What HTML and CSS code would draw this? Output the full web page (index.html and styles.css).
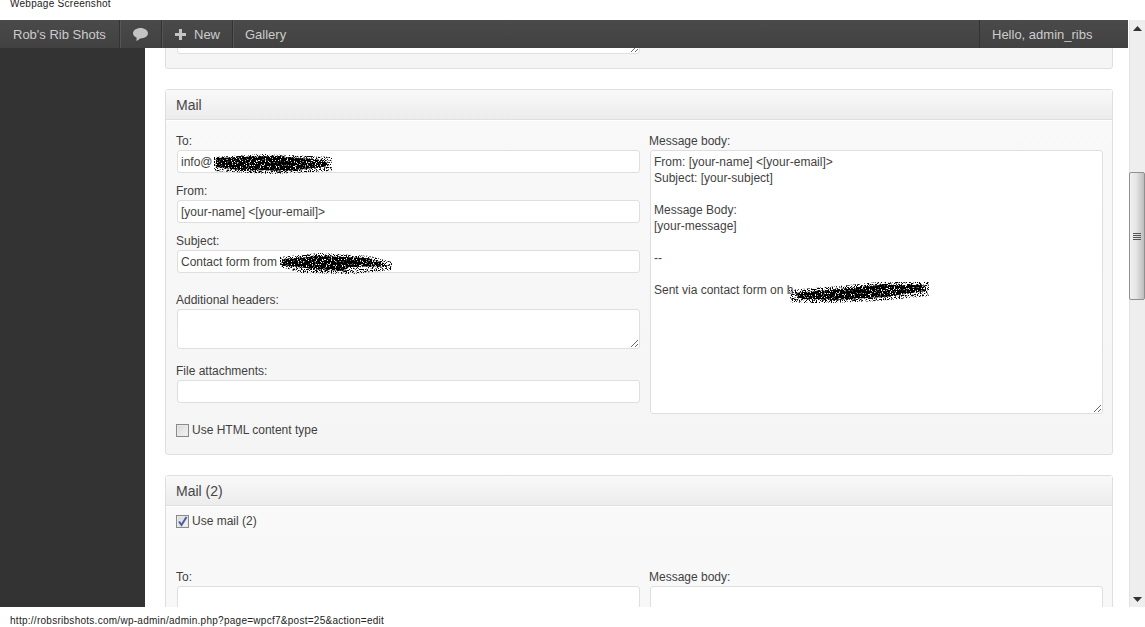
FILE: index.html
```html
<!DOCTYPE html>
<html lang="en">
<head>
<meta charset="utf-8">
<title>Edit contact form</title>
<link rel="stylesheet" href="styles.css">
</head>
<body>
<svg class="defs" width="0" height="0" aria-hidden="true">
  <filter id="speckle" x="0" y="0" width="100%" height="100%">
    <feTurbulence type="fractalNoise" baseFrequency="0.8" numOctaves="1" seed="7" result="n"/>
    <feColorMatrix in="n" type="matrix" values="0 0 0 0 0  0 0 0 0 0  0 0 0 0 0  12 0 0 0 -6" result="m"/>
    <feComposite in="SourceGraphic" in2="m" operator="in"/>
  </filter>
  <filter id="speckle-dense" x="0" y="0" width="100%" height="100%">
    <feTurbulence type="fractalNoise" baseFrequency="0.8" numOctaves="1" seed="3" result="n"/>
    <feColorMatrix in="n" type="matrix" values="0 0 0 0 0  0 0 0 0 0  0 0 0 0 0  12 0 0 0 -4.4" result="m"/>
    <feComposite in="SourceGraphic" in2="m" operator="in"/>
  </filter>
</svg>
<div class="caption">Webpage Screenshot</div>
<div class="window">
  <div class="viewport">
    <nav class="adminbar">
      <a class="bar-item bar-site">Rob's Rib Shots</a>
      <a class="bar-item bar-comments">
        <svg width="15" height="13" viewBox="0 0 15 13"><path fill="#c4c4c4" d="M7.500 0C3.400 0 0 2.300 0 5.200c0 1.900 1.400 3.500 3.500 4.400.3 1.200.1 2.300-.4 3.200 1.600-.4 3-1.400 3.800-2.400h.6c4.100 0 7.500-2.300 7.500-5.200S11.600 0 7.500 0z"/></svg>
      </a>
      <a class="bar-item bar-new">
        <svg width="11" height="11" viewBox="0 0 11 11"><path fill="#c4c4c4" d="M4 0h3v4h4v3H7v4H4V7H0V4h4z"/></svg>
        <span>New</span>
      </a>
      <a class="bar-item bar-gallery">Gallery</a>
      <a class="bar-item bar-user">Hello, admin_ribs</a>
    </nav>
    <div class="workspace">
      <aside class="sidebar"></aside>
      <main class="content">
        <section class="panel panel-cut">
          <textarea class="field-area stub-area" aria-label="Form"></textarea>
        </section>

        <section class="panel">
          <h3 class="panel-title">Mail</h3>
          <div class="panel-body">
            <div class="columns">
              <div class="col">
                <div class="field">
                  <label>To:</label>
                  <div class="scrub-wrap">
                    <input class="field-input" value="info@">
                    <svg class="scrub scrub-to" width="118" height="20" viewBox="0 0 118 20"><path filter="url(#speckle)" d="M0 3 50 0l68 3v14l-60 3L0 17z"/><path filter="url(#speckle-dense)" d="M2 4 60 2l50 4 5 6-40 5-50-1-23-3z"/></svg>
                  </div>
                </div>
                <div class="field">
                  <label>From:</label>
                  <input class="field-input" value="[your-name] &lt;[your-email]&gt;">
                </div>
                <div class="field field-wide">
                  <label>Subject:</label>
                  <div class="scrub-wrap">
                    <input class="field-input" value="Contact form from">
                    <svg class="scrub scrub-subject" width="112" height="21" viewBox="0 0 112 21"><path filter="url(#speckle)" d="M0 4 40 0l50 3 22 6v8l-40 4-50-1L0 14z"/><path filter="url(#speckle-dense)" d="M3 6 40 3l46 2 18 5 1 3-36 1-6 4-30-2-32-4z"/></svg>
                  </div>
                </div>
                <div class="field field-mid">
                  <label>Additional headers:</label>
                  <textarea class="field-area area-headers"></textarea>
                </div>
                <div class="field">
                  <label>File attachments:</label>
                  <input class="field-input">
                </div>
                <div class="check-row">
                  <span class="box"></span>
                  <span>Use HTML content type</span>
                </div>
              </div>
              <div class="col">
                <div class="field">
                  <label>Message body:</label>
                  <div class="scrub-wrap">
                    <textarea class="field-area area-body">From: [your-name] &lt;[your-email]&gt;
Subject: [your-subject]

Message Body:
[your-message]

--

Sent via contact form on h</textarea>
                    <svg class="scrub scrub-body" width="140" height="21" viewBox="0 0 140 21"><path filter="url(#speckle)" d="M0 8 50 4 90 0h50v14l-50 5-50 2H2z"/><path filter="url(#speckle-dense)" d="M6 11 50 7l40-4 44 0 3 6-41 6-50 3-36-1z"/></svg>
                  </div>
                </div>
              </div>
            </div>
          </div>
        </section>

        <section class="panel">
          <h3 class="panel-title">Mail (2)</h3>
          <div class="panel-body panel-body-second">
            <div class="check-row check-row-top">
              <span class="box">
                <svg width="11" height="11" viewBox="0 0 11 11"><path fill="none" stroke="#4a5f9e" stroke-width="2" d="M2 5.500 4.500 9 9.500 1"/></svg>
              </span>
              <span>Use mail (2)</span>
            </div>
            <div class="columns">
              <div class="col">
                <div class="field">
                  <label>To:</label>
                  <input class="field-input" aria-label="To">
                </div>
              </div>
              <div class="col">
                <div class="field">
                  <label>Message body:</label>
                  <textarea class="field-area area-body" aria-label="Message body"></textarea>
                </div>
              </div>
            </div>
          </div>
        </section>
      </main>
    </div>
  </div>
  <div class="scrollbar">
    <div class="sb-btn"><svg width="9" height="5" viewBox="0 0 9 5"><path fill="#333" d="M4.500 0 9 5H0z"/></svg></div>
    <div class="sb-track">
      <div class="sb-thumb">
        <span class="grip"></span><span class="grip"></span><span class="grip"></span><span class="grip"></span>
      </div>
    </div>
    <div class="sb-btn"><svg width="9" height="5" viewBox="0 0 9 5"><path fill="#333" d="M0 0h9L4.500 5z"/></svg></div>
  </div>
</div>
<div class="status">http://robsribshots.com/wp-admin/admin.php?page=wpcf7&amp;post=25&amp;action=edit</div>
</body>
</html>
```
FILE: styles.css
```css
* { box-sizing: border-box; }
html, body { margin: 0; height: 100%; overflow: hidden; }
body {
  display: flex;
  flex-direction: column;
  background: #fff;
  color: #3f3f3f;
  font: 12px/14px "Liberation Sans", Arial, sans-serif;
}
.defs { position: absolute; }

.caption {
  flex: 0 0 20px;
  padding-left: 10px;
  font-size: 10px;
  line-height: 7px;
  letter-spacing: .27px;
  color: #222;
}
.status {
  flex: 0 0 20px;
  padding: 7px 0 0 10px;
  font-size: 10px;
  line-height: 13px;
  letter-spacing: .27px;
  color: #222;
}

.window { flex: 1; min-height: 0; display: flex; }
.viewport { flex: 0 0 1128px; display: flex; flex-direction: column; min-height: 0; }

.adminbar {
  flex: 0 0 28px;
  display: flex;
  background: linear-gradient(#4a4a4a, #414141);
  color: #ccc;
  font-size: 13px;
  line-height: 16px;
}
.bar-item {
  flex: none;
  display: flex;
  align-items: center;
  padding: 1px 0 0 13px;
  border-right: 1px solid #333;
  box-shadow: 1px 0 0 #555;
  white-space: nowrap;
}
.bar-site { width: 120px; }
.bar-comments { width: 42px; }
.bar-new { width: 71px; gap: 8px; }
.bar-gallery { padding-left: 12px; border-right: 0; box-shadow: none; }
.bar-user {
  margin-left: auto;
  width: 149px;
  border-right: 0;
  box-shadow: none;
  border-left: 1px solid #333;
  padding-left: 12px;
}

.workspace { flex: 1; min-height: 0; display: flex; overflow: hidden; }
.sidebar { flex: 0 0 145px; background: #333; }
.content { flex: 1; min-width: 0; padding: 0 15px 0 20px; overflow: hidden; }

.panel {
  margin-bottom: 20px;
  border: 1px solid #dfdfdf;
  border-radius: 3px;
  background: linear-gradient(#f9f9f9, #f5f5f5);
}
.panel-cut { height: 41px; margin-top: -20px; padding: 0 472px 0 11px; background: #f5f5f5; }
.stub-area { height: 25px; }

.panel-title {
  margin: 0;
  height: 30px;
  padding: 0 10px;
  font-size: 14px;
  font-weight: normal;
  line-height: 30px;
  color: #464646;
  background: linear-gradient(#f9f9f9, #ececec);
  border-bottom: 1px solid #dfdfdf;
  box-shadow: 0 1px 0 #fff;
}
.panel-body { padding: 13px 9px 17px 11px; }
.panel-body-second { padding-top: 8px; }

.columns { display: grid; grid-template-columns: 463px 453px; column-gap: 10px; }
.col { min-width: 0; }

.field { margin-bottom: 10px; }
.field label { display: block; margin: 0 0 2px -1px; padding-top: 1px; }
.field-wide { margin-bottom: 19px; }
.field-mid { margin-bottom: 14px; }
.col:last-child .field { margin-bottom: 0; }

.field-input, .field-area {
  display: block;
  width: 100%;
  margin: 0;
  border: 1px solid #dfdfdf;
  border-radius: 3px;
  background: #fff;
  color: #3f3f3f;
  font: 12px/16px "Liberation Sans", Arial, sans-serif;
  outline: 0;
}
.field-input { height: 23px; padding: 1px 3px; }
.field-area { padding: 3px; }
.area-headers { height: 40px; }
.area-body { height: 264px; }

.scrub-wrap { position: relative; }
.scrub { position: absolute; }
.scrub-to { left: 37px; top: 4px; }
.scrub-subject { left: 103px; top: 3px; }
.scrub-body { left: 139px; top: 132px; }

.check-row { display: flex; align-items: center; gap: 3px; margin: 20px 0 0 -1px; height: 14px; }
.check-row-top { margin-top: 0; }
.check-row-top + .columns { margin-top: 41px; }
.box {
  flex: 0 0 13px;
  display: flex;
  align-items: center;
  justify-content: center;
  width: 13px;
  height: 13px;
  border: 1px solid #8a8a8a;
  background: linear-gradient(135deg, #d8d8d8, #f4f4f4);
  box-shadow: inset 0 0 0 1px #e8e8e8;
}

.scrollbar {
  flex: 0 0 16px;
  margin-left: 1px;
  display: flex;
  flex-direction: column;
  background: #eee;
  box-shadow: inset 1px 0 0 #e2e2e2;
}
.sb-btn { flex: 0 0 16px; display: flex; align-items: center; justify-content: center; }
.sb-track { flex: 1; padding-top: 136px; }
.sb-thumb {
  height: 128px;
  display: flex;
  flex-direction: column;
  align-items: center;
  justify-content: center;
  gap: 1px;
  border: 1px solid #8f8f8f;
  border-radius: 2px;
  background: linear-gradient(90deg, #f1f1f1, #e4e4e4 45%, #bdbdbd);
}
.grip { width: 8px; height: 1px; background: #555; }
```
